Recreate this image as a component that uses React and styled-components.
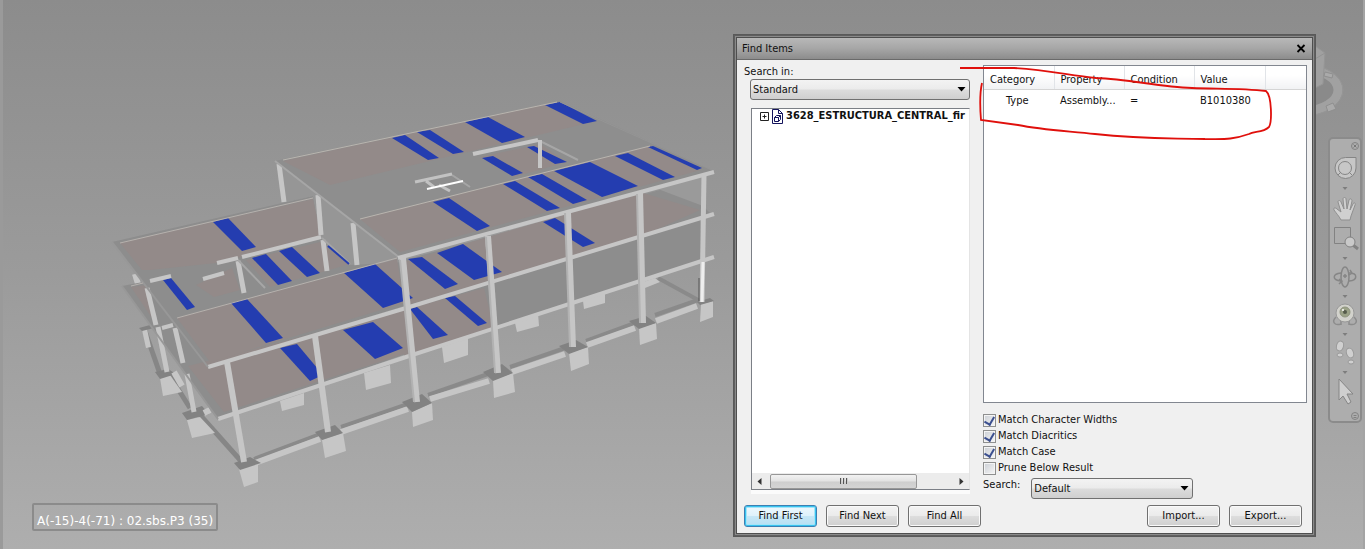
import React from "react";
import styled, { createGlobalStyle, css } from "styled-components";

const GlobalStyle = createGlobalStyle`
  * { box-sizing: border-box; }
  html, body { margin: 0; padding: 0; }
  body, button, select, input, table {
    font-family: "DejaVu Sans Condensed", "Noto Sans", sans-serif;
    font-size: 11px;
    line-height: 14px;
    color: #111;
  }
`;

const Viewport = styled.main`
  position: relative;
  display: flex;
  flex-direction: column;
  justify-content: space-between;
  align-items: flex-start;
  min-height: 100vh;
  padding: 90px 0 18px 32px;
  overflow: hidden;
  background: linear-gradient(#8c8c8c, #9b9b9b 50%, #aeaeae);
  border-left: 3px solid #9a9a9a;
  border-right: 2px solid #a4a4a4;
`;

const Building = styled.svg`
  display: block;
  width: 630px;
  height: 410px;
  margin: 0 0 3px 65px;
`;

const SelectionLabel = styled.div`
  margin-left: -3px;
  padding: 9px 3px 1px;
  border: 2px solid #8b8b8b;
  border-radius: 2px;
  font-family: "DejaVu Sans", sans-serif;
  font-size: 12px;
  color: #fff;
  white-space: nowrap;
`;

const Cube = styled.svg`
  position: absolute;
  top: 34px;
  right: 10px;
  width: 72px;
  height: 84px;
`;

const NavBar = styled.nav`
  position: absolute;
  top: 137px;
  right: 1px;
  display: flex;
  flex-direction: column;
  align-items: center;
  width: 34px;
  height: 286px;
  background: #adadad;
  border: 2px solid #8b8b8b;
  border-radius: 5px;
`;

const NavButton = styled.button`
  display: block;
  width: 30px;
  height: ${(p) => p.$h}px;
  padding: 0;
  border: 0;
  background: none;
  svg { display: block; }
`;

const Dialog = styled.section`
  position: absolute;
  top: 34px;
  right: 47px;
  width: 583px;
  max-width: 100%;
  border: 1px solid #595959;
  padding: 2px;
  background: #5f5f5f;
`;

const DialogInner = styled.div`
  border: 1px solid #4e4e4e;
  background: #f0f0f0;
  box-shadow: 0 0 0 1px #8a8a8a;
`;

const TitleBar = styled.header`
  display: flex;
  align-items: center;
  justify-content: space-between;
  height: 22px;
  padding: 0 6px 0 5px;
  background: linear-gradient(#b8b8b8, #a6a6a6 50%, #8c8c8c);
  border-bottom: 1px solid #6a6a6a;
`;

const Title = styled.h1`
  margin: 0;
  font-size: 11px;
  font-weight: 400;
`;

const CloseButton = styled.button`
  width: 10px;
  height: 10px;
  padding: 0;
  border: 0;
  background: none;
  svg { display: block; }
`;

const Body = styled.div`
  display: grid;
  grid-template-columns: 226px 1fr;
  column-gap: 13px;
  padding: 4px 5px 0 7px;
`;

const LeftPane = styled.div`
  display: flex;
  flex-direction: column;
  padding-top: 1px;
`;

const RightPane = styled.div`
  display: flex;
  flex-direction: column;
  padding-top: 1px;
`;

const SelectWrap = styled.div`
  position: relative;
  width: ${(p) => p.$w};
  margin-left: ${(p) => p.$ml || 0}px;
  svg {
    position: absolute;
    right: 4px;
    top: 8px;
    pointer-events: none;
  }
`;

const Select = styled.select`
  display: block;
  width: 100%;
  height: 21px;
  padding: 0 20px 0 2px;
  appearance: none;
  border: 1px solid #707070;
  border-radius: 3px;
  background: linear-gradient(#f3f3f3, #ebebeb 48%, #dcdcdc 52%, #cfcfcf);
`;

const Tree = styled.div`
  display: flex;
  flex-direction: column;
  justify-content: space-between;
  height: 382px;
  margin: 8px 0 0 7px;
  border: 1px solid #7b7f86;
  border-right: 1px solid #e4e4e4;
  background: #fff;
  box-shadow: 0 4px 0 #fbfbfb;
`;

const TreeItem = styled.div`
  display: flex;
  align-items: center;
  height: 14px;
  padding-left: 8px;
  font-weight: 700;
  white-space: nowrap;
  svg { flex: none; margin-right: 3px; }
`;

const ScrollTrack = styled.div`
  display: flex;
  align-items: center;
  justify-content: space-between;
  height: 16px;
  padding: 0 5px;
  background: #ececec;
`;

const ScrollThumb = styled.div`
  display: flex;
  align-items: center;
  justify-content: center;
  gap: 1px;
  width: 147px;
  height: 15px;
  margin: 0 34px 0 0;
  border: 1px solid #979797;
  border-radius: 2px;
  background: linear-gradient(#f2f2f2, #e2e2e2 48%, #cecece 52%, #d4d4d4);
`;

const Grip = styled.i`
  width: 2px;
  height: 6px;
  background: #555;
  border-right: 1px solid #ccc;
`;

const ListView = styled.div`
  height: 338px;
  border: 1px solid #828790;
  background: #fff;
`;

const Table = styled.table`
  width: 100%;
  table-layout: fixed;
  border-collapse: collapse;
`;

const Th = styled.th`
  width: ${(p) => p.$w || "auto"};
  height: 23px;
  padding: 5px 0 0 6px;
  text-align: left;
  font-weight: 400;
  background: linear-gradient(#fff 40%, #f1f2f4);
  border-right: 1px solid #e1e4e8;
  border-bottom: 1px solid #d5d5d5;
  &:last-child { border-right: 0; }
`;

const Td = styled.td`
  height: 23px;
  padding: 0 0 0 ${(p) => p.$pl || 6}px;
  white-space: nowrap;
`;

const Checks = styled.div`
  display: flex;
  flex-direction: column;
  gap: 2px;
  margin-top: 10px;
`;

const CheckLabel = styled.label`
  display: flex;
  align-items: center;
  gap: 2px;
`;

const Checkbox = styled.input`
  appearance: none;
  width: 13px;
  height: 13px;
  margin: 0;
  border: 1px solid #8e8f8f;
  box-shadow: inset 0 0 0 1px #f4f4f4;
  background: linear-gradient(135deg, #cbcfd5, #f6f6f6);
  display: grid;
  place-items: center;
  &:checked::after {
    content: "";
    width: 5px;
    height: 8px;
    margin-bottom: 2px;
    border: solid #3b4f8f;
    border-width: 0 2px 2px 0;
    transform: rotate(30deg);
  }
`;

const SearchRow = styled.div`
  display: flex;
  align-items: flex-start;
  margin-top: 3px;
`;

const Buttons = styled.div`
  display: flex;
  gap: 9px;
  padding: 6px 10px 6px 7px;
`;

const PushButton = styled.button`
  width: 73px;
  height: 22px;
  padding: 0;
  border: 1px solid #707070;
  border-radius: 3px;
  background: linear-gradient(#f3f3f3, #ebebeb 48%, #dddddd 52%, #cfcfcf);
  box-shadow: inset 0 0 0 1px #fafafa;
  ${(p) => p.$push && css`margin-left: auto;`}
  ${(p) =>
    p.$primary &&
    css`
      border-color: #3c7fb1;
      background: linear-gradient(#eef8fd, #dff2fb 48%, #c6e7f6 52%, #b5dff3);
      box-shadow: inset 0 0 0 1px #37c3f0, inset 0 0 0 2px #a5e4f8;
    `}
`;

const Markup = styled.svg`
  position: absolute;
  top: 27px;
  left: 222px;
  width: 330px;
  height: 84px;
  pointer-events: none;
`;

const Arrow = () => (
  <svg width="9" height="5" viewBox="0 0 9 5" aria-hidden="true">
    <path d="M0.5 0h8l-4 4.5z" fill="#000" />
  </svg>
);

const BLUE = "#243db0";
const PINK = "#938a89";
const LIGHT = "#c6c6c6";

const Poly = ({ list, fill }) => (
  <g fill={fill}>
    {list.map((p) => (
      <polygon key={p} points={p} />
    ))}
  </g>
);

const Lines = ({ list, color, width }) => (
  <g stroke={color} strokeWidth={width} fill="none">
    {list.map((d) => (
      <path key={d} d={d} />
    ))}
  </g>
);

const slabs = [
  "122,286 143,282 208,366 404,306 406,354 218,420",
  "112,242 313,196 320,238 404,258 404,306 208,367",
  "404,260 704,178 703,206 713,216 404,308",
  "404,310 700,219 703,262 404,358",
];

const pinkLower = [
  "131,287 146,285 153,318 156,324",
  "188,366 208,361 404,310 404,354 224,412",
  "404,310 484,288 494,328 404,356",
  "404,262 640,192 700,210 640,237 404,306",
  "120,243 313,199 321,237 240,257 216,263 150,270 142,270",
  "246,260 320,242 350,264 270,287",
  "196,285 232,268 240,290 214,297",
  "177,318 397,259 404,303 210,362",
];

const blueLower = [
  "280,348 297,344 323,375 310,381",
  "343,330 373,322 403,348 375,359",
  "445,298 455,296 487,323 478,326",
  "410,309 417,307 448,335 433,339",
  "408,259 422,257 458,284 445,289",
  "437,253 463,244 502,272 474,280",
  "543,222 555,218 595,243 583,247",
  "213,222 228,218 256,247 242,251",
  "252,258 266,254 292,281 278,285",
  "279,251 292,247 320,273 307,277",
  "163,280 171,278 195,307 187,310",
  "231,303 247,299 283,338 266,343",
  "344,273 375,264 413,298 383,308",
];

const blueUpper = [
  "392,138 405,135 439,158 428,160",
  "417,132 430,130 464,152 453,154",
  "465,122 488,117 525,137 502,143",
  "545,105 560,102 597,121 583,124",
  "482,158 493,156 523,173 512,176",
  "527,147 534,146 567,162 555,164",
  "433,202 449,198 490,226 477,231",
  "503,184 515,181 560,208 547,211",
  "528,177 542,174 587,200 573,204",
  "554,171 590,162 638,186 602,197",
  "615,156 628,153 675,177 663,180",
  "648,147 653,146 702,168 697,170",
];

const footings = [
  "239,469 258,463 258,482 244,487",
  "322,440 343,433 346,451 325,458",
  "187,420 200,417 215,433 192,438",
  "160,378 170,375 182,392 163,396",
  "142,330 147,329 151,347 146,348",
  "412,412 432,403 433,420 413,427",
  "493,380 513,373 515,392 494,398",
  "569,353 588,347 589,364 571,371",
  "639,328 656,323 657,339 640,345",
  "701,304 713,301 713,317 700,322",
];

const hungFootings = [
  "280,401 304,393 304,405 282,411",
  "364,373 390,365 391,383 366,390",
  "442,347 468,338 468,355 444,363",
  "515,323 538,313 539,326 517,332",
  "583,301 605,293 605,303 584,309",
  "643,282 655,278 660,282 645,288",
];

const caps = [
  "234,463 250,457 261,463 240,470",
  "315,432 335,425 343,433 322,440",
  "182,413 202,406 209,414 187,420",
  "155,372 168,369 176,374 160,379",
  "139,328 150,325 154,328 142,331",
  "402,402 422,394 432,403 412,412",
  "483,372 502,364 513,373 493,381",
  "559,346 576,340 588,347 569,354",
  "629,321 646,316 656,323 639,329",
  "697,302 710,298 714,301 700,305",
];

const Model = () => (
  <Building viewBox="100 90 630 410" role="img" aria-label="Building structure model">
    <Lines color="#868686" width={5} list={["M200 415L241 461", "M168 373L190 408", "M144 328L160 374"]} />
    <Lines
      color="#8a8a8a"
      width={4}
      list={[
        "M254 459L320 434", "M341 427L408 404", "M428 395L488 374", "M510 367L565 348",
        "M586 341L635 323", "M655 315L698 300", "M658 278L700 301",
      ]}
    />
    <Lines
      color={LIGHT}
      width={6}
      list={[
        "M255 463L320 439", "M341 432L408 409", "M430 399L489 381", "M512 372L565 354",
        "M587 345L635 328", "M656 321L697 306",
      ]}
    />
    <Poly fill={LIGHT} list={hungFootings} />
    <Poly fill={LIGHT} list={footings} />
    <Poly fill="#828282" list={caps} />
    <Lines color={LIGHT} width={6} list={["M135 274L138 284", "M174 372L182 386", "M204 413L210 410"]} />
    <Poly fill="#8d8d8d" list={slabs} />
    <Poly fill="#969696" list={["275,161 402,258 404,262 350,265 322,238 313,196 285,202"]} />
    <Poly fill={PINK} list={pinkLower} />
    <Poly fill="#9a9a9a" list={["643,192 703,175 703,206 650,186"]} />
    <Poly fill={BLUE} list={blueLower} />
    <Lines
      color={LIGHT}
      width={4}
      list={[
        "M242 257L321 237", "M217 263L238 258", "M203 279L224 273", "M150 281L171 276",
        "M208 367L406 308L714 214", "M218 419L406 357L714 257", "M162 328L173 325",
      ]}
    />
    <Lines
      color={LIGHT}
      width={5}
      list={[
        "M238 261L244 293", "M323 240L327 271", "M318 195L321 235", "M353 223L357 265",
        "M279 164L284 202", "M147 288L156 325", "M158 327L167 372", "M175 328L183 363", "M187 374L194 412",
      ]}
    />
    <Lines color="#a6a6a6" width={2} list={["M238 260L265 288", "M322 238L350 264"]} />
    <path d="M328 246L349 264" stroke={BLUE} strokeWidth="2" />
    <Lines color="#989898" width={2} list={["M112 242L208 367", "M122 286L218 419"]} />
    <Lines color="#b6b1ad" width={1} list={["M120 243L313 198", "M177 318L397 258", "M131 286L143 283"]} />
    <Poly fill="#8e8e8e" list={["275,161 560,101 714,171 398,257"]} />
    <Poly
      fill={PINK}
      list={[
        "283,161 557,102 597,121 330,185",
        "360,219 650,146 701,170 400,252",
        "480,157 540,144 567,162 514,177",
      ]}
    />
    <Poly fill={BLUE} list={blueUpper} />
    <Lines color="#b9b5af" width={1} list={["M283 160L557 102", "M360 219L650 146"]} />
    <Lines color="#a6a6a6" width={2} list={["M275 161L400 258", "M542 142L578 160", "M452 175L470 187"]} />
    <Lines color="#959595" width={1} list={["M560 102L714 171"]} />
    <Lines color={LIGHT} width={4} list={["M473 154L538 140", "M398 258L714 172", "M540 140V168"]} />
    <Lines color="#c2c2c2" width={3} list={["M415 182L452 174", "M426 181L434 187", "M439 185L450 191"]} />
    <path d="M427 189L463 181" stroke="#fff" strokeWidth="2" />
    <Lines
      color={LIGHT}
      width={6}
      list={[
        "M227 362L244 462", "M315 336L328 432", "M403 258L417 402", "M488 236L498 373",
        "M568 213L573 347", "M640 192L643 323",
      ]}
    />
    <Lines
      color="#b2b2b2"
      width={2}
      list={["M400 260L414 402", "M486 237L495 373", "M565 213L570 347", "M637 194L640 323"]}
    />
    <path d="M704 175L702 302" stroke={LIGHT} strokeWidth="5" />
    <path d="M703 262L702 302" stroke="#eee" strokeWidth="3" />
    <path d="M699 278V301" stroke="#555" strokeWidth="1" />
  </Building>
);

const ViewCube = () => (
  <Cube viewBox="0 0 72 84" aria-hidden="true">
    <ellipse cx="22" cy="56" rx="35" ry="21" fill="#8a8a8a" stroke="#a1a1a1" strokeWidth="9" />
    <ellipse cx="22" cy="56" rx="40" ry="26" fill="none" stroke="#969696" />
    <path d="M10 14L33 11L44 19L42 50L30 56L10 60Z" fill="#a0a0a0" stroke="#959595" />
    <path d="M10 20L34 25L44 19M34 25V52" fill="none" stroke="#939393" />
    <path d="M44 38l8 2-1 4-8-2zM45 72l7-3 3 6-8 3z" fill="#aaa" stroke="#8f8f8f" />
  </Cube>
);

const navItems = [
  ["Steering wheel", 37, true, <g key="w" fill="#c7c7c7" stroke="#858585"><path d="M5 14a10.500 10.500 0 0 1 10.500-10.500H26V14A10.500 10.500 0 0 1 5 14z" /><circle cx="15" cy="14" r="6.500" /><path d="M8 21l3-3M19 18l3 3" /></g>],
  ["Pan", 32, false, <path key="p" fill="#d0d0d0" stroke="#8f8f8f" d="M11 29C9 25 6 22 4 19c-1-2 1-3 3-1l4 3L8 11c0-2 2-2 3 0l3 7-1-10c0-2 3-2 3 0l1 10 2-9c1-2 3-1 3 1l-2 9 3-6c1-2 3-1 2 1l-4 11-1 4z" />],
  ["Zoom window", 38, true, <g key="z" fill="none" stroke="#828282"><path d="M4.500 4.500h16v16h-16z" /><path d="M23 22l5 4" strokeWidth="3" /><circle cx="20" cy="19" r="5" fill="#c9c9c9" /></g>],
  ["Orbit", 38, true, <g key="o" fill="none" stroke="#868686" strokeWidth="1.500"><ellipse cx="15" cy="16" rx="4" ry="10" /><path d="M11 12c-9 1-9 7 0 8M19 12c9 0 9 7 0 8M9 18l3 2-3 3M20 9l2 3-3 2M15 13v4M13 15h4" /></g>],
  ["Look", 38, true, <g key="l"><path d="M6 18c-5 5-1 9 5 7M24 18c5 5 1 9-5 7M11 21v5M19 21v5" fill="none" stroke="#8c8c8c" strokeWidth="1.500" /><circle cx="15" cy="14" r="9" fill="#d2d2cc" stroke="#999" /><circle cx="15" cy="13" r="5" fill="#9ba287" stroke="#8f947f" /><circle cx="15" cy="13" r="2" fill="#555b4b" /><circle cx="13" cy="11" r="1" fill="#fff" /></g>],
  ["Walk", 38, true, <g key="k" fill="#d0d0d0" stroke="#999"><ellipse cx="10" cy="9" rx="3.500" ry="5" transform="rotate(15 10 9)" /><ellipse cx="10" cy="18" rx="3" ry="2" /><ellipse cx="20" cy="16" rx="3.500" ry="5" transform="rotate(-20 20 16)" /><ellipse cx="21" cy="25" rx="3" ry="2" /></g>],
  ["Select", 32, false, <path key="s" fill="#cfcfcf" stroke="#858585" d="M9 4v21l4-4 5 8 3-2-4-8h6z" />],
];

const Navigation = () => (
  <NavBar aria-label="Navigation tools">
    <NavButton $h={15} aria-label="Close navigation bar">
      <svg width="30" height="12" viewBox="0 0 30 12"><circle cx="25" cy="5" r="3.500" fill="none" stroke="#828282" /><path d="M23.500 3.500l3 3M26.500 3.500l-3 3" stroke="#777" /></svg>
    </NavButton>
    {navItems.map(([name, h, caret, icon]) => (
      <NavButton key={name} $h={h} aria-label={name}>
        <svg width="30" height={h} viewBox={`0 0 30 ${h}`}>
          {icon}
          {caret && <path d={`M12.500 ${h - 4}h5l-2.500 3z`} fill="#7d7d7d" />}
        </svg>
      </NavButton>
    ))}
    <NavButton $h={14} aria-label="Navigation bar options">
      <svg width="30" height="14" viewBox="0 0 30 14"><circle cx="25" cy="9" r="3.500" fill="none" stroke="#828282" /><path d="M23.500 8.500h3M23.500 10.500h3" stroke="#808080" /></svg>
    </NavButton>
  </NavBar>
);

const options = [
  ["Match Character Widths", true],
  ["Match Diacritics", true],
  ["Match Case", true],
  ["Prune Below Result", false],
];

const FindItems = () => (
  <Dialog role="dialog" aria-labelledby="find-title">
    <DialogInner>
      <TitleBar>
        <Title id="find-title">Find Items</Title>
        <CloseButton aria-label="Close">
          <svg width="10" height="10" viewBox="0 0 10 10"><path d="M1.500 1l7 7M8.500 1l-7 7" stroke="#000" strokeWidth="1.800" /></svg>
        </CloseButton>
      </TitleBar>
      <Body>
        <LeftPane>
          <label htmlFor="scope">Search in:</label>
          <SelectWrap $w="220px" $ml={6}>
            <Select id="scope"><option>Standard</option></Select>
            <Arrow />
          </SelectWrap>
          <Tree>
            <TreeItem>
              <svg width="23" height="15" viewBox="0 0 23 15" fill="none">
                <path d="M.5 3.500h8v8h-8zM2.500 7.500h4M4.500 5.500v4" stroke="#222" />
                <path d="M12.500 .5h6l4 4v10h-10z" fill="#fff" stroke="#14145c" />
                <path d="M18.500 .5v4h4M14.500 8.500h4v4h-4zM14.500 8.500l2-2h4v4l-2 2M18.500 8.500l2-2" stroke="#14145c" />
              </svg>
              3628_ESTRUCTURA_CENTRAL_fir
            </TreeItem>
            <ScrollTrack>
              <svg width="5" height="7" viewBox="0 0 5 7"><path d="M4.500 0v7L.5 3.500z" fill="#333" /></svg>
              <ScrollThumb><Grip /><Grip /><Grip /></ScrollThumb>
              <svg width="5" height="7" viewBox="0 0 5 7"><path d="M.5 0v7l4-3.500z" fill="#333" /></svg>
            </ScrollTrack>
          </Tree>
        </LeftPane>
        <RightPane>
          <ListView>
            <Table>
              <thead>
                <tr>
                  <Th $w="70px">Category</Th>
                  <Th $w="70px">Property</Th>
                  <Th $w="70px">Condition</Th>
                  <Th $w="71px">Value</Th>
                  <Th aria-label="Empty" />
                </tr>
              </thead>
              <tbody>
                <tr>
                  <Td $pl={22}>Type</Td>
                  <Td>Assembly...</Td>
                  <Td>=</Td>
                  <Td>B1010380</Td>
                  <Td />
                </tr>
              </tbody>
            </Table>
          </ListView>
          <Checks>
            {options.map(([text, on]) => (
              <CheckLabel key={text}>
                <Checkbox type="checkbox" defaultChecked={on} />
                {text}
              </CheckLabel>
            ))}
          </Checks>
          <SearchRow>
            <label htmlFor="mode">Search:</label>
            <SelectWrap $w="162px" $ml={11}>
              <Select id="mode"><option>Default</option></Select>
              <Arrow />
            </SelectWrap>
          </SearchRow>
        </RightPane>
      </Body>
      <Buttons>
        <PushButton $primary>Find First</PushButton>
        <PushButton>Find Next</PushButton>
        <PushButton>Find All</PushButton>
        <PushButton $push>Import...</PushButton>
        <PushButton>Export...</PushButton>
      </Buttons>
    </DialogInner>
    <Markup viewBox="956 62 330 84" aria-hidden="true">
      <path
        d="M960 68H1014C1048 70 1072 76 1096 78C1130 79 1158 87 1192 88C1218 89 1242 88 1266 91C1272 96 1272 122 1269 127C1263 133 1254 131 1249 134C1232 140 1224 139 1205 139C1160 138 1140 139 1095 134C1068 131 1042 130 1018 125L981 120C980 108 979 96 982 83"
        fill="none"
        stroke="#e0100c"
        strokeWidth="1.800"
      />
    </Markup>
  </Dialog>
);

export default function App() {
  return (
    <>
      <GlobalStyle />
      <Viewport>
        <Model />
        <SelectionLabel>A(-15)-4(-71) : 02.sbs.P3 (35)</SelectionLabel>
        <ViewCube />
        <Navigation />
        <FindItems />
      </Viewport>
    </>
  );
}
